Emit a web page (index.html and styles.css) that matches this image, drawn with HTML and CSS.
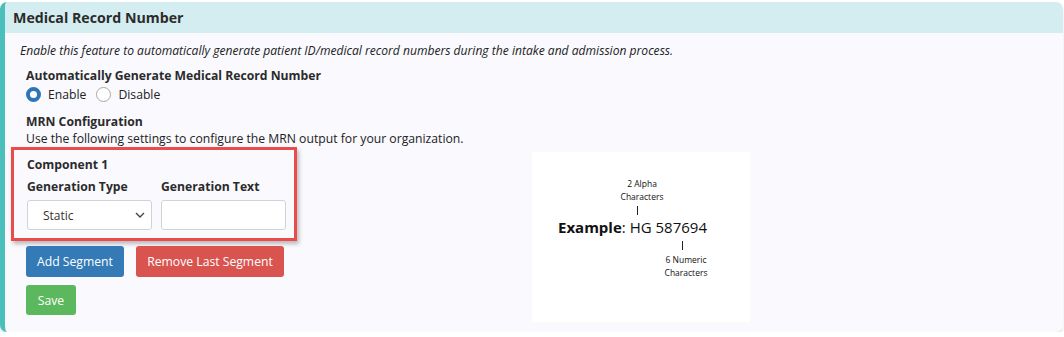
FILE: index.html
```html
<!DOCTYPE html>
<html>
<head>
<meta charset="utf-8">
<link rel="stylesheet" href="styles.css">
</head>
<body>
<div class="card">
  <div class="card-header">Medical Record Number</div>
  <div class="card-body">
    <p class="desc">Enable this feature to automatically generate patient ID/medical record numbers during the intake and admission process.</p>
    <div class="section">
      <div class="label">Automatically Generate Medical Record Number</div>
      <div class="radios">
        <label class="radio"><span class="dot on"></span>Enable</label>
        <label class="radio"><span class="dot"></span>Disable</label>
      </div>
      <div class="label mrn">MRN Configuration</div>
      <div class="help">Use the following settings to configure the MRN output for your organization.</div>
      <div class="row">
        <div class="left">
          <div class="component">
            <div class="label">Component 1</div>
            <div class="fields">
              <div class="field">
                <div class="label">Generation Type</div>
                <div class="select">Static
                  <svg width="10" height="6" viewBox="0 0 10 6"><path d="M1 1l4 4 4-4" fill="none" stroke="#444" stroke-width="1.4"/></svg>
                </div>
              </div>
              <div class="field">
                <div class="label">Generation Text</div>
                <div class="input"></div>
              </div>
            </div>
          </div>
          <div class="buttons">
            <button class="btn blue">Add Segment</button>
            <button class="btn red">Remove Last Segment</button>
          </div>
          <button class="btn green">Save</button>
        </div>
        <div class="example">
          <div class="ex-top">2 Alpha<br>Characters</div>
          <div class="tick tick1"></div>
          <div class="ex-main"><b>Example</b>: HG 587694</div>
          <div class="tick tick2"></div>
          <div class="ex-bottom">6 Numeric<br>Characters</div>
        </div>
      </div>
    </div>
  </div>
</div>
</body>
</html>
```

FILE: styles.css
```css
* { box-sizing: border-box; }
html, body { margin: 0; padding: 0; background: #ffffff; }
body {
  font-family: "Open Sans", "Noto Sans", sans-serif;
  font-size: 12.2px;
  color: #222;
  padding: 2px 1px 0 0;
}
.card {
  width: 1063px;
  height: 330px;
  border-left: 5px solid #4bbfbc;
  border-radius: 7px;
  background: #f9f9fe;
  box-shadow: 0 2px 3px rgba(0,0,0,0.12);
  overflow: hidden;
}
.card-header {
  height: 31px;
  background: #d4edf0;
  font-size: 14.2px;
  font-weight: 700;
  color: #2b2b2b;
  padding: 6px 0 0 8px;
}
.card-body { padding: 9px 0 0 15px; }
.desc {
  margin: 0;
  font-style: italic;
  font-size: 12.1px;
  color: #222;
  line-height: 18px;
}
.section { padding: 7px 0 0 6px; }
.label {
  font-weight: 700;
  color: #2b2b2b;
  line-height: 17px;
}
.radios { display: flex; gap: 10px; height: 20px; align-items: center; }
.radio { display: flex; align-items: center; gap: 7px; }
.dot {
  width: 15px; height: 15px; border-radius: 50%;
  border: 1px solid #a8a8a8; background: #fff;
}
.dot.on { border: 4.5px solid #2f75b5; background: #fff; }
.mrn { margin-top: 9px; }
.help { line-height: 18px; }
.row { display: flex; margin-top: -1px; }
.left { width: 506px; }
.component {
  margin-left: -15px;
  width: 286px;
  height: 94px;
  border: 3px solid #ec4b4b;
  box-shadow: 2px 3px 4px rgba(0,0,0,0.25);
  padding: 6px 0 0 13px;
}
.fields { display: flex; gap: 9px; margin-top: 5px; }
.field .label { margin-bottom: 5px; }
.select, .input {
  width: 125px; height: 30px;
  background: #fff;
  border: 1px solid #cfd3d8;
  border-radius: 3px;
}
.select {
  display: flex; align-items: center; justify-content: space-between;
  padding: 0 6px 0 15px; font-size: 12px; color: #333;
}
.buttons { display: flex; gap: 12px; margin-top: 5px; }
.btn {
  font-family: "Open Sans", "Noto Sans", sans-serif;
  font-size: 12.2px;
  color: #fff;
  border: none;
  border-radius: 3px;
  height: 31px;
  padding: 0;
  white-space: nowrap;
  cursor: pointer;
}
.blue { background: #337ab7; width: 98px; }
.red { background: #d9534f; width: 148px; }
.green { background: #5cb85c; width: 50px; height: 30px; margin-top: 8px; }
.example {
  margin-top: 5px;
  width: 218px;
  height: 170px;
  background: #fff;
  position: relative;
  font-family: "Open Sans", "Liberation Sans", sans-serif;
  color: #111;
}
.ex-top {
  position: absolute; left: 80px; top: 25px;
  font-size: 8.5px; text-align: center; line-height: 13px; width: 60px;
}
.tick { position: absolute; width: 1px; height: 9px; background: #222; }
.tick1 { left: 105px; top: 54px; }
.tick2 { left: 150px; top: 89px; }
.ex-main {
  position: absolute; left: 26px; top: 65px;
  font-size: 15px; line-height: 20px;
}
.ex-bottom {
  position: absolute; left: 124px; top: 101px;
  font-size: 8.5px; text-align: center; line-height: 13px; width: 60px;
}
```
